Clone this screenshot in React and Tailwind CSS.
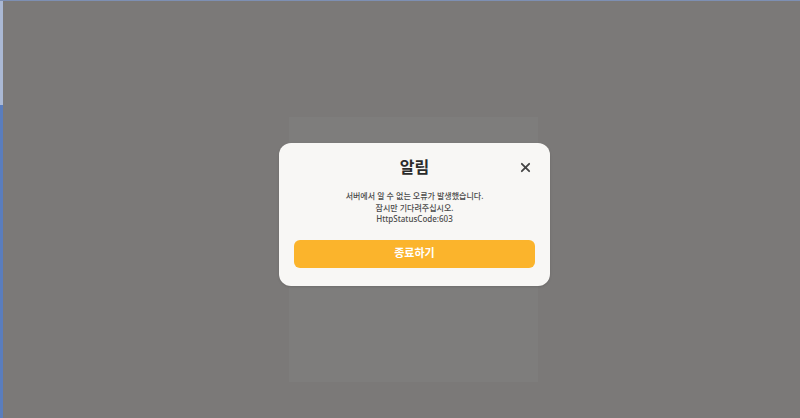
import React from 'react';

const AlertModal = ({ title, lines, actionLabel }) => {
  return (
    <div className="w-[271px] rounded-[12px] bg-[#f8f7f5] px-[15px] pt-[13px] pb-[18px] shadow-sm">
      {/* header */}
      <div className="relative flex h-[22px] items-center justify-center">
        <span className="text-[16px] font-bold leading-none text-[#2b2b2b]">{title}</span>
        <button className="absolute right-[4px] top-[5px] flex h-[12px] w-[12px] items-center justify-center text-[#444]">
          <svg viewBox="0 0 12 12" width="11" height="11" fill="none" stroke="currentColor" strokeWidth="2" strokeLinecap="round">
            <path d="M2 2L10 10M10 2L2 10" />
          </svg>
        </button>
      </div>

      {/* body */}
      <div className="mt-[12px] text-center text-[8px] font-medium leading-[11.5px] text-[#4a4a4a]">
        {lines.map((line) => (
          <p key={line}>{line}</p>
        ))}
      </div>

      <button className="mt-[15px] flex h-[28px] w-full items-center justify-center rounded-[6px] bg-[#fbb42c] text-[11px] font-bold text-white">
        {actionLabel}
      </button>
    </div>
  );
};

export default function App() {
  return (
    <div
      className="flex h-[418px] w-[800px] overflow-hidden border-t border-[#7d8fb3] bg-[#7b7978]"
      style={{ fontFamily: '"Noto Sans", "Noto Sans CJK KR", sans-serif' }}
    >
      {/* left window edge */}
      <div className="flex w-[3px] flex-col">
        <div className="h-[104px] bg-[#aab8d4]" />
        <div className="flex-1 bg-[#5a7dbd]" />
      </div>

      <div className="relative flex-1">
        {/* faint panel behind overlay */}
        <div className="ml-[286px] mt-[116px] h-[265px] w-[249px] bg-[#7e7d7c]" />

        {/* modal overlay */}
        <div className="absolute inset-0 pl-[276px] pt-[142px]">
          <AlertModal
            title="알림"
            lines={['서버에서 알 수 없는 오류가 발생했습니다.', '잠시만 기다려주십시오.', 'HttpStatusCode:603']}
            actionLabel="종료하기"
          />
        </div>
      </div>
    </div>
  );
}
